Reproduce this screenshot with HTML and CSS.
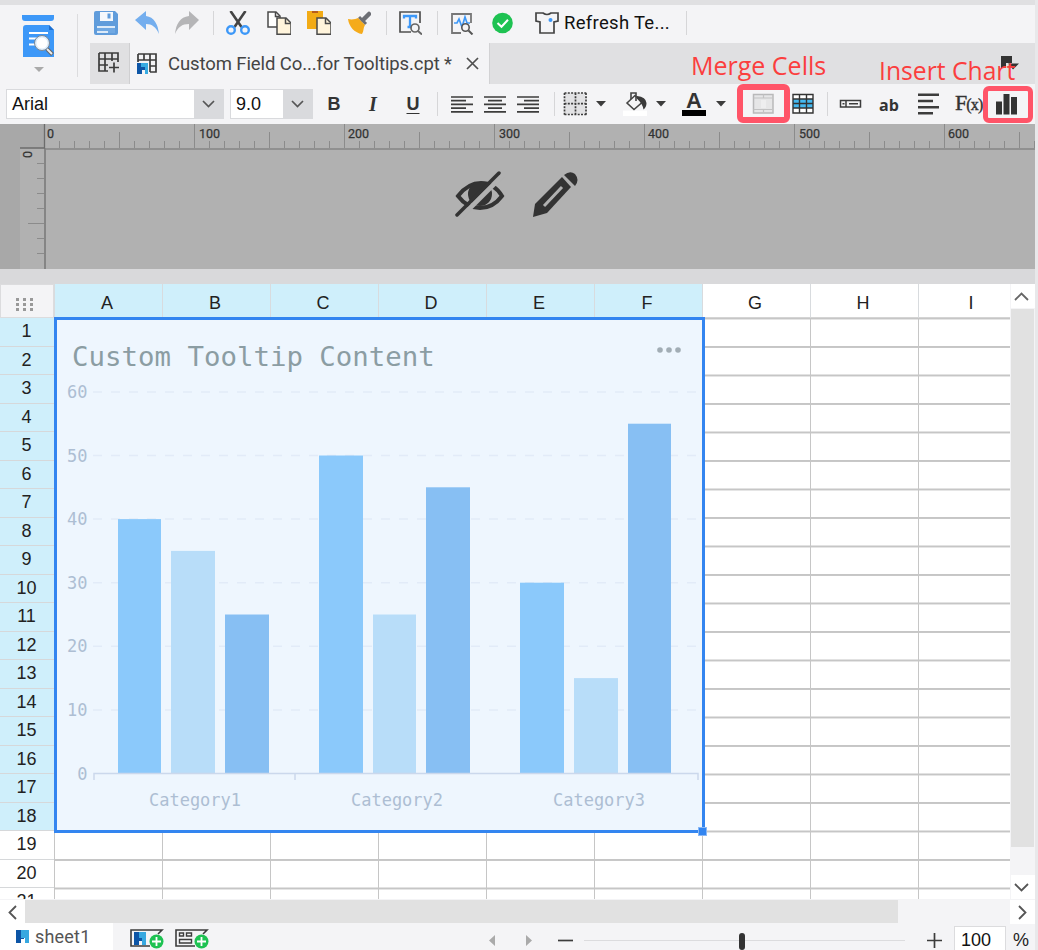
FILE: index.html
```html
<!DOCTYPE html>
<html lang="en">
<head>
    <meta charset="UTF-8">
    <meta name="viewport" content="width=device-width, initial-scale=1.0">
    <title>Report Designer</title>
    <link rel="stylesheet" href="styles.css">
</head>
<body>
    <div class="app">
        <header class="header">
            <div class="mode">
                <svg width="34" height="60" viewBox="0 0 34 60">
                    <path d="M0 1h32v3q0 3-3 3H3q-3 0-3-3z" fill="#3d98f8"/>
                    <path d="M3 11h24l5 5v27H1V14q0-3 3-3z" fill="#3d98f8"/>
                    <path d="M27 11l5 5h-5z" fill="#1c6fd0"/>
                    <path d="M7 19h19M7 24.500h8M7 30.500h6" stroke="#fff" stroke-width="2"/>
                    <path d="M25 35l5.500 5.500" stroke="#666" stroke-width="4"/>
                    <path d="M25 35l5 5" stroke="#eee" stroke-width="2"/>
                    <circle cx="20" cy="29" r="7.500" fill="#dcebf9" stroke="#7b8794"/>
                    <circle cx="20" cy="29" r="5.500" fill="#fff"/>
                    <path d="M12 53h10l-5 5z" fill="#aaa"/>
                </svg>
            </div>
            <div class="header-main">
                <div class="toolbar">
                    <svg class="icon" viewBox="0 0 24 24"><path d="M0 2q0-2 2-2h19l3 3v19q0 2-2 2H2q-2 0-2-2z" fill="#609cdb"/><path d="M6 1h13v9H6z" fill="#f4f8fc"/><path d="M13.500 2.500h3v5h-3z" fill="#609cdb"/><path d="M3 15h18v7H3z" fill="#70a8e2"/><path d="M3 16h18M3 21h11" stroke="#fff" stroke-width="1.500"/></svg>
                    <svg class="icon" viewBox="0 0 24 24"><path d="M0 9L11 0v5c8 1 12 8 13 18C21 16 17 13 11 13v6z" fill="#74aeee"/></svg>
                    <svg class="icon" viewBox="0 0 24 24"><path d="M24 9L14 0v5C5 6 1 13 0 23c3-7 7-10 14-10v6z" fill="#b5b5b7"/></svg>
                    <span class="sep"></span>
                    <svg class="icon" viewBox="0 0 24 24"><path d="M4.500 0L15.500 16M19.500 0L8.500 16" stroke="#444" stroke-width="2.600"/><circle cx="5" cy="19" r="3.800" fill="none" stroke="#3d98f8" stroke-width="2.400"/><circle cx="19" cy="19" r="3.800" fill="none" stroke="#3d98f8" stroke-width="2.400"/></svg>
                    <svg class="icon" viewBox="0 0 24 24"><path d="M1 1h8l4 4v11H1z" fill="#fff" stroke="#4a4a4a" stroke-width="1.500"/><path d="M8.500 1v4.500h4" fill="none" stroke="#4a4a4a" stroke-width="1.500"/><path d="M10 7h9l5 5v11.200H10z" fill="#fff4dc" stroke="#4a4a4a" stroke-width="1.500"/><path d="M18.500 7v5.500h5" fill="none" stroke="#4a4a4a" stroke-width="1.500"/></svg>
                    <svg class="icon" viewBox="0 0 24 24"><path d="M0 0h16v18H0z" fill="#f2ab16"/><path d="M5 0h6v2H5z" fill="#b85c1b"/><path d="M10 7h9l5 5v11.200H10z" fill="#fff4dc" stroke="#4a4a4a" stroke-width="1.500"/><path d="M18.500 7v5.500h5" fill="none" stroke="#4a4a4a" stroke-width="1.500"/></svg>
                    <svg class="icon" viewBox="0 0 24 24"><path d="M16 9l6-6" stroke="#6d6f75" stroke-width="4.500" stroke-linecap="round"/><path d="M12 6l7 7" stroke="#6d6f75" stroke-width="3"/><path d="M1 8c4 1 8 0 10-1l7 7c-2 3-1 6-3 9C8 22 2 16 1 8z" fill="#f5ab1b"/></svg>
                    <span class="sep"></span>
                    <svg class="icon" viewBox="0 0 24 24"><path d="M22 12V1H2v20h11" fill="none" stroke="#505050" stroke-width="1.700"/><path d="M6 7.500V5h12v2.500M12 5v11.500M9.500 16h5" fill="none" stroke="#3d98f8" stroke-width="2.300"/><circle cx="17" cy="17" r="4" fill="#f4f4f6" stroke="#666" stroke-width="1.700"/><path d="M20 20l4 3.500" stroke="#666" stroke-width="2"/></svg>
                    <span class="sep"></span>
                    <svg class="icon" viewBox="0 0 24 24"><path d="M21 12V3H2v19h9" fill="none" stroke="#777" stroke-width="1.800"/><path d="M4 12h3l2-4 3 8 3-10 2 6h3" fill="none" stroke="#3d98f8" stroke-width="1.700"/><circle cx="15.500" cy="16.500" r="3.700" fill="#f4f4f6" stroke="#555" stroke-width="1.600"/><path d="M18.500 19.500l4 4" stroke="#555" stroke-width="2"/></svg>
                    <svg class="icon" viewBox="0 0 24 24"><circle cx="12.500" cy="12" r="10.300" fill="#1ec252"/><path d="M7.500 12l4 3.800 6.500-7" fill="none" stroke="#fff" stroke-width="2"/></svg>
                    <svg class="icon" viewBox="0 0 24 24"><path d="M1 2h7q4 3 8 0h7v8l-4 1v11H5V11l-4-1z" fill="none" stroke="#444" stroke-width="1.700"/><circle cx="15.500" cy="9" r="2" fill="#3d98f8"/></svg>
                    <span class="tool-label">Refresh Te...</span>
                    <span class="sep"></span>
                </div>
                <div class="tabs">
                    <div class="tab-new">
                        <svg width="22" height="22" viewBox="0 0 22 22"><path d="M1 1h19v9M1 1v18h9M1 7h19M1 13h9M7 1v18M14 1v8" fill="none" stroke="#3c3c3c" stroke-width="1.700"/><path d="M11 15.500h10M16 10.500v10" stroke="#3c3c3c" stroke-width="1.700"/></svg>
                    </div>
                    <div class="tab">
                        <svg width="21" height="21" viewBox="0 0 21 21"><path d="M1 1h18v18h-6M1 7h18M13 13h6M1 1v8M7 1v6M13 1v18" fill="none" stroke="#3c3c3c" stroke-width="1.700"/><path d="M0 10h4v4h4v3H5v4H0z" fill="#0d55a6"/><path d="M4 10h7v11H8v-7H4z" fill="#37abe2"/></svg>
                        <span class="tab-name">Custom Field Co...for Tooltips.cpt *</span>
                        <svg width="13" height="13" viewBox="0 0 13 13"><path d="M1 1l11 11M12 1L1 12" stroke="#4f4f4f" stroke-width="1.700"/></svg>
                    </div>
                    <svg class="tab-menu" width="18" height="16" viewBox="0 0 18 16"><path d="M0 0h11v7H5v5H0zM7 7.500h11l-6 6z" fill="#333"/></svg>
                </div>
            </div>
        </header>

        <div class="format-bar">
            <div class="combo combo-font"><span>Arial</span><i><svg width="13" height="8" viewBox="0 0 13 8"><path d="M1 1l5.500 5.500L12 1" fill="none" stroke="#555" stroke-width="1.700"/></svg></i></div>
            <div class="combo combo-size"><span>9.0</span><i><svg width="13" height="8" viewBox="0 0 13 8"><path d="M1 1l5.500 5.500L12 1" fill="none" stroke="#555" stroke-width="1.700"/></svg></i></div>
            <b class="letter">B</b>
            <b class="letter italic">I</b>
            <b class="letter underline">U</b>
            <span class="sep"></span>
            <svg class="icon" viewBox="0 0 24 24"><path d="M1 5h22M1 8.700h15M1 12.400h22M1 16.100h15M1 19.800h22" stroke="#3c3c3c" stroke-width="1.700"/></svg>
            <svg class="icon" viewBox="0 0 24 24"><path d="M1 5h22M5 8.700h14M1 12.400h22M5 16.100h14M1 19.800h22" stroke="#3c3c3c" stroke-width="1.700"/></svg>
            <svg class="icon" viewBox="0 0 24 24"><path d="M1 5h22M8 8.700h15M1 12.400h22M8 16.100h15M1 19.800h22" stroke="#3c3c3c" stroke-width="1.700"/></svg>
            <span class="sep"></span>
            <svg class="icon" viewBox="0 0 24 24"><path d="M2 1h20v21H2z" fill="#e2e2e4"/><path d="M1.500 1h22M1.500 22.500h22M1.500 11.700h22M1.500 1v22M12.500 1v22M23 1v22" fill="none" stroke="#3c3c3c" stroke-width="1.700" stroke-dasharray="2 1.300"/></svg>
            <svg class="caret" viewBox="0 0 10 6"><path d="M0 0h10L5 5.500z" fill="#3c3c3c"/></svg>
            <svg class="icon" viewBox="0 0 24 24"><path d="M0 18.500h24V24H0z" fill="#fff"/><path d="M4 11L12 3.500l7 7-8 7z" fill="#f4f4f6" stroke="#444" stroke-width="1.600"/><path d="M8 7V1h5v8" fill="none" stroke="#444" stroke-width="1.600"/><path d="M14 4q9 1 9.500 7 0 4-3 6.500-1-6-6.500-11z" fill="#3a3a3a"/></svg>
            <svg class="caret" viewBox="0 0 10 6"><path d="M0 0h10L5 5.500z" fill="#3c3c3c"/></svg>
            <b class="letter font-color">A</b>
            <svg class="caret" viewBox="0 0 10 6"><path d="M0 0h10L5 5.500z" fill="#3c3c3c"/></svg>
            <div class="marked">
                <svg class="icon" viewBox="0 0 24 24"><path d="M2.500 2.500h19.500v18.500h-19.500z" fill="#e6e6e7" stroke="#b9b9ba" stroke-width="1.500"/><path d="M2.500 6h19M2.500 17.500h19M12.500 2.500V6M12.500 17v3" stroke="#c2c2c3" stroke-width="1.200"/><path d="M10 8h5v8h-5z" fill="#eeeeef"/></svg>
                <span class="mark mark-merge"></span>
                <span class="note note-merge">Merge Cells</span>
            </div>
            <svg class="icon" viewBox="0 0 24 24"><path d="M2 2.500h20v18.500H2z" fill="#fff"/><path d="M2 7h20v9H2z" fill="#45b9f0"/><path d="M2 2.500h20v18.500H2zM2 7h20M2 11.500h20M2 16h20M8.500 2v19M15.500 2v19" fill="none" stroke="#333" stroke-width="1.400"/></svg>
            <span class="sep"></span>
            <svg class="icon" viewBox="0 0 24 24"><path d="M2.500 8.500h20v6.500h-20zM8 8.500v6M11 11.700h9M4.500 11.700h2" fill="none" stroke="#3c3c3c" stroke-width="1.500"/></svg>
            <b class="letter ab">ab</b>
            <svg class="icon" viewBox="0 0 24 24"><path d="M2 2.700h21M2 9h15M2 15.300h21M2 21.300h15" stroke="#3c3c3c" stroke-width="2.500"/></svg>
            <b class="letter fx">F<small>(x)</small></b>
            <div class="marked">
                <svg class="icon" viewBox="0 0 24 24"><path d="M2 9.500h6v13H2zM9.500 2h6v20.500h-6zM17 5h6v17.500h-6z" fill="#333"/></svg>
                <span class="mark mark-chart"></span>
                <span class="note note-chart">Insert Chart</span>
            </div>
        </div>

        <div class="parent-area">
            <svg class="ruler" width="1035" height="145" viewBox="0 0 1035 145">
                <defs>
                    <pattern id="ticks-x" x="44" y="0" width="150" height="24" patternUnits="userSpaceOnUse">
                        <path d="M.5 0v24M75.500 8v16M15.500 17v7M30.500 17v7M45.500 17v7M60.500 17v7M90.500 17v7M105.500 17v7M120.500 17v7M135.500 17v7" stroke="#8b8b8b"/>
                    </pattern>
                </defs>
                <path d="M0 0h45v24H20v121H0z" fill="#a8a8a8"/>
                <path d="M45 0h990v24H45z" fill="url(#ticks-x)"/>
                <path d="M37 39.500h7M37 54.500h7M37 69.500h7M37 84.500h7M28 99.500h16M37 114.500h7M37 129.500h7" stroke="#8b8b8b"/>
                <path d="M45 25h990" stroke="#909090" stroke-width="2"/>
                <path d="M45 24v121" stroke="#858585" stroke-width="2"/>
                <path d="M44.500 0v24M20 24h25" stroke="#6c6c6c" stroke-width="1.300"/>
                <g class="ruler-text">
                    <text x="47" y="14">0</text>
                    <text x="199" y="14">100</text>
                    <text x="348" y="14">200</text>
                    <text x="499" y="14">300</text>
                    <text x="648" y="14">400</text>
                    <text x="799" y="14">500</text>
                    <text x="948" y="14">600</text>
                    <text x="-34" y="32" transform="rotate(-90)">0</text>
                </g>
            </svg>
            <div class="parent-tools">
                <svg width="50" height="48" viewBox="0 0 50 48">
                    <path d="M3 25Q13 12 26 12t21 13Q38 37 25 37 12 37 3 25z" fill="none" stroke="#333" stroke-width="4"/>
                    <circle cx="25" cy="23" r="12" fill="#333"/>
                    <path d="M4 48L49 3" stroke="#b1b1b1" stroke-width="5"/>
                    <path d="M2 44L44 2" stroke="#333" stroke-width="3.500" stroke-linecap="round"/>
                </svg>
                <svg width="48" height="48" viewBox="0 0 48 48">
                    <path d="M0 46l2-13L29 6l9 10-24 26z" fill="#333"/>
                    <path d="M11 35l18-19" stroke="#b1b1b1" stroke-width="3"/>
                    <path d="M31 4q6-5 11-1 5 6 0 12z" fill="#333"/>
                </svg>
            </div>
        </div>

        <div class="sheet">
            <div class="sheet-main">
                <div class="col-heads">
                    <div class="corner"><svg width="17" height="14" viewBox="0 0 17 14"><path d="M0 1.500h17M0 6.500h17M0 11.500h17" stroke="#999" stroke-width="3" stroke-dasharray="3 4"/></svg></div>
                    <div class="col active">A</div>
                    <div class="col active">B</div>
                    <div class="col active">C</div>
                    <div class="col active">D</div>
                    <div class="col active">E</div>
                    <div class="col active">F</div>
                    <div class="col">G</div>
                    <div class="col">H</div>
                    <div class="col">I</div>
                </div>
                <div class="sheet-body">
                    <div class="row-heads">
                        <div class="row active">1</div>
                        <div class="row active">2</div>
                        <div class="row active">3</div>
                        <div class="row active">4</div>
                        <div class="row active">5</div>
                        <div class="row active">6</div>
                        <div class="row active">7</div>
                        <div class="row active">8</div>
                        <div class="row active">9</div>
                        <div class="row active">10</div>
                        <div class="row active">11</div>
                        <div class="row active">12</div>
                        <div class="row active">13</div>
                        <div class="row active">14</div>
                        <div class="row active">15</div>
                        <div class="row active">16</div>
                        <div class="row active">17</div>
                        <div class="row active">18</div>
                        <div class="row">19</div>
                        <div class="row">20</div>
                        <div class="row">21</div>
                    </div>
                    <div class="cells">
                        <div class="chart">
                            <svg id="chart" width="645" height="509" viewBox="57 320 645 509"></svg>
                            <span class="handle"></span>
                        </div>
                    </div>
                </div>
            </div>
            <div class="v-scroll">
                <div class="scroll-btn"><svg width="15" height="9" viewBox="0 0 15 9"><path d="M1 8l6.500-6.500L14 8" fill="none" stroke="#666" stroke-width="1.800"/></svg></div>
                <div class="v-thumb"></div>
                <div class="scroll-btn"><svg width="15" height="9" viewBox="0 0 15 9"><path d="M1 1l6.500 6.500L14 1" fill="none" stroke="#555" stroke-width="1.800"/></svg></div>
            </div>
        </div>

        <div class="h-scroll">
            <div class="scroll-btn"><svg width="9" height="15" viewBox="0 0 9 15"><path d="M8 1L1.500 7.500 8 14" fill="none" stroke="#555" stroke-width="1.800"/></svg></div>
            <div class="h-thumb"></div>
            <div class="scroll-btn"><svg width="9" height="15" viewBox="0 0 9 15"><path d="M1 1l6.500 6.500L1 14" fill="none" stroke="#555" stroke-width="1.800"/></svg></div>
        </div>

        <footer class="status">
            <div class="sheet-tab">
                <svg width="13" height="13" viewBox="0 0 13 13"><path d="M0 0h5v5h3v4H5v4H0z" fill="#0d55a6"/><path d="M5 0h8v13H9V8H5V5h0z" fill="#37a8e0"/></svg>
                <span>sheet1</span>
            </div>
            <svg class="add-sheet" width="34" height="20" viewBox="0 0 34 20"><path d="M20 17H1V1h31l-4 4" fill="none" stroke="#3c3c3c" stroke-width="1.600"/><path d="M4 3h5v5h3v4H9v4H4z" fill="#0d55a6"/><path d="M9 3h7v13h-4V9H9z" fill="#37a8e0"/><circle cx="26.500" cy="12.500" r="7" fill="#1ec252"/><path d="M22 12.500h9M26.500 8v9" stroke="#fff" stroke-width="1.800"/></svg>
            <svg class="add-form" width="34" height="20" viewBox="0 0 34 20"><path d="M20 17H1V1h31l-4 4" fill="none" stroke="#3c3c3c" stroke-width="1.600"/><path d="M4.500 4h4v3h-4zM11.500 4h5v3h-5zM4.500 10.500h12v3.500h-12z" fill="none" stroke="#3c3c3c" stroke-width="1.400"/><circle cx="26.500" cy="12.500" r="7" fill="#1ec252"/><path d="M22 12.500h9M26.500 8v9" stroke="#fff" stroke-width="1.800"/></svg>
            <svg class="pager" width="43" height="11" viewBox="0 0 43 11"><path d="M6 0v11L0 5.500zM37 0v11l6-5.500z" fill="#aaa"/></svg>
            <svg class="zoom-out" width="15" height="16" viewBox="0 0 15 16"><path d="M0 8.500h15" stroke="#3c3c3c" stroke-width="1.700"/></svg>
            <div class="slider"><span></span></div>
            <svg class="zoom-in" width="15" height="16" viewBox="0 0 15 16"><path d="M0 8.500h15M7.500 1v15" stroke="#3c3c3c" stroke-width="1.700"/></svg>
            <div class="zoom-value">100</div>
            <span class="percent">%</span>
        </footer>
    </div>
    <script src="chart.js"></script>
</body>
</html>
```

FILE: styles.css
```css
/* Base styles */
* {
    box-sizing: border-box;
}

body {
    margin: 0;
    width: 1038px;
    height: 950px;
    overflow: hidden;
    background-color: #e8e8ea;
    font-family: "Liberation Sans", Arial, sans-serif;
    color: #222;
}

svg {
    display: block;
}

.app {
    width: 1035px;
    height: 950px;
    display: flex;
    flex-direction: column;
    background-color: #f4f4f6;
    border-top: 5px solid #e0e0e2;
    overflow: hidden;
}

/* Header */
.header {
    display: flex;
    height: 79px;
}

.mode {
    width: 78px;
    height: 63px;
    margin: 9px 12px 0 0;
    padding-left: 22px;
    border-right: 1px solid #dcdcde;
}

.header-main {
    flex: 1;
}

.toolbar {
    display: grid;
    grid-template-columns: 41px 40px 38px 13px 41px 40px 40px 39px 12px 39px 13px 40px 45px 29px 122px 1px;
    align-items: center;
    height: 38px;
    padding: 0 0 2px 4px;
}

.icon {
    width: 24px;
    height: 24px;
}

.sep {
    width: 1px;
    height: 24px;
    background-color: #d6d6d8;
}

.tool-label {
    font-family: Roboto, sans-serif;
    font-size: 18.5px;
    letter-spacing: 0.3px;
    color: #111;
    white-space: nowrap;
}

.tabs {
    display: flex;
    height: 41px;
    background-color: #e0e0e2;
}

.tab-new {
    width: 40px;
    padding: 9px 0 0 8px;
    border-right: 1px solid #cfcfd1;
}

.tab {
    display: flex;
    align-items: center;
    width: 360px;
    padding-left: 7px;
    background-color: #f4f4f6;
    border-right: 1px solid #d2d2d4;
}

.tab-name {
    width: 289px;
    margin: 0 9px 0 10px;
    font-family: Roboto, sans-serif;
    font-size: 18.5px;
    letter-spacing: -0.1px;
    color: #444;
    white-space: nowrap;
}

.tab-menu {
    margin: 13px 0 0 511px;
}

/* Format bar */
.format-bar {
    display: grid;
    grid-template-columns: 224px 92px 39px 40px 36px 13px 33px 33px 38px 9px 33px 27px 33px 26px 34px 35px 40px 36px 11px 39px 39px 39px 39px 24px;
    align-items: center;
    height: 40px;
    padding-left: 6px;
}

.combo {
    display: flex;
    height: 30px;
    border: 1px solid #d9dadd;
    background-color: #fff;
    font-size: 18px;
    line-height: 28px;
    color: #111;
}

.combo span {
    flex: 1;
    padding-left: 5px;
}

.combo i {
    display: flex;
    align-items: center;
    justify-content: center;
    width: 29px;
    background-color: #d9dadd;
}

.combo-font {
    width: 218px;
}

.combo-size {
    width: 83px;
}

.letter {
    width: 24px;
    text-align: center;
    font-size: 18px;
    line-height: 22px;
    color: #333;
}

.italic {
    font-family: "Liberation Serif", serif;
    font-style: italic;
    font-size: 20px;
}

.underline {
    text-decoration: underline;
    text-underline-offset: 3px;
    text-decoration-thickness: 1px;
}

.font-color {
    height: 24px;
    border-bottom: 6px solid #000;
    font-size: 22px;
    line-height: 17px;
}

.ab {
    font-family: "Open Sans", sans-serif;
    font-size: 16px;
    line-height: 26px;
    padding-top: 2px;
}

.fx {
    font-family: "Liberation Serif", serif;
    font-size: 22px;
    font-weight: normal;
    letter-spacing: -1px;
    white-space: nowrap;
    -webkit-text-stroke: 0.4px #333;
}

.fx small {
    font-size: 16px;
    letter-spacing: -0.8px;
}

.caret {
    width: 10px;
    height: 6px;
}

/* Call-outs over the tool buttons */
.marked {
    position: relative;
}

.mark {
    position: absolute;
    border: 6px solid #ff5468;
    border-radius: 6px;
}

.mark-merge {
    left: -14px;
    top: -8px;
    width: 53px;
    height: 39px;
}

.mark-chart {
    left: -11px;
    top: -6px;
    width: 50px;
    height: 37px;
    border-width: 5px;
}

.note {
    position: absolute;
    font-family: "Open Sans", sans-serif;
    font-size: 25px;
    line-height: 30px;
    color: #fb3e3e;
    white-space: nowrap;
}

.note-merge {
    left: -60px;
    top: -42px;
}

.note-chart {
    left: -115px;
    top: -36px;
    font-size: 24.7px;
}

/* Parent report area with rulers */
.parent-area {
    position: relative;
    height: 145px;
    background-color: #b1b1b1;
}

.ruler-text {
    font-family: Roboto, sans-serif;
    font-size: 12.5px;
    fill: #333;
    stroke: #333;
    stroke-width: 0.25px;
}

.parent-tools {
    position: absolute;
    left: 455px;
    top: 47px;
    display: flex;
    gap: 28px;
}

/* Sheet */
.sheet {
    display: flex;
    height: 630px;
    border-top: 15px solid #d9d9db;
}

.sheet-main {
    width: 1010px;
    background-color: #fff;
    overflow: hidden;
}

.col-heads {
    display: flex;
    width: 1026px;
    height: 34px;
    font-size: 18px;
}

.corner {
    display: flex;
    align-items: center;
    width: 54px;
    padding: 7px 0 0 15px;
    background-color: #f4f4f6;
    border: 1px solid #dcdcde;
}

.col {
    width: 108px;
    line-height: 38px;
    text-align: center;
    padding-right: 3px;
    border-left: 1px solid #d8dbde;
    border-bottom: 1px solid #d4d4d4;
}

.active {
    background-color: #cfeffb;
}

.sheet-body {
    display: flex;
    height: 581px;
}

.row-heads {
    width: 54px;
    font-size: 18px;
}

.row {
    height: 28.5px;
    line-height: 26px;
    padding-right: 1px;
    text-align: center;
    border-bottom: 1.5px solid #d6d8da;
}

.cells {
    width: 956px;
    height: 581px;
    background-image: linear-gradient(90deg, #c6c6c6 1.5px, transparent 1.5px), linear-gradient(#c6c6c6 1.5px, transparent 1.5px);
    background-size: 108px 28.5px;
    background-position: 0 -0.5px;
}

.chart {
    position: relative;
    width: 651px;
    height: 516px;
    margin-top: -1px;
    border: 3px solid #3385f0;
    background-color: #eef6fe;
}

.handle {
    position: absolute;
    right: -5px;
    bottom: -6px;
    width: 9px;
    height: 9px;
    background-color: #3385f0;
    border: 1px solid #8ab8f5;
}

.chart-title {
    font-family: "DejaVu Sans Mono", monospace;
    font-size: 27.4px;
    fill: #8b9da3;
}

.chart-label {
    font-family: "DejaVu Sans Mono", monospace;
    font-size: 17px;
    fill: #adbed3;
}

.grid-line {
    stroke: #e2ebf8;
    stroke-width: 1.5px;
    stroke-dasharray: 9 9;
}

.axis {
    fill: none;
    stroke: #cbd8ec;
    stroke-width: 1.5px;
}

.dot {
    fill: #a2adb5;
}

.series-1 {
    fill: #8bc9fb;
}

.series-2 {
    fill: #b8ddf9;
}

.series-3 {
    fill: #87bff3;
}

/* Scrollbars */
.v-scroll {
    display: flex;
    flex-direction: column;
    width: 24px;
    margin-left: 1px;
}

.scroll-btn {
    display: flex;
    align-items: center;
    justify-content: center;
    flex: none;
    height: 24px;
    background-color: #fff;
}

.v-scroll .scroll-btn {
    padding-right: 3px;
}

.v-thumb {
    width: 23px;
    height: 538px;
    margin: 1px 0 28px;
    background-color: #e1e1e1;
}

.h-scroll {
    display: flex;
    justify-content: space-between;
    height: 24px;
    padding-top: 1px;
}

.h-scroll .scroll-btn {
    width: 25px;
}

.h-thumb {
    width: 873px;
    height: 23px;
    margin-right: auto;
    background-color: #e1e1e1;
}

/* Status bar */
.status {
    display: flex;
    align-items: flex-start;
    height: 27px;
}

.sheet-tab {
    display: flex;
    align-items: center;
    gap: 6px;
    width: 113px;
    height: 27px;
    padding-left: 16px;
    background-color: #fff;
    font-family: Roboto, sans-serif;
    font-size: 18px;
    letter-spacing: 0.2px;
    color: #555;
}

.add-sheet {
    margin: 6px 0 0 17px;
}

.add-form {
    margin: 6px 0 0 11px;
}

.pager {
    margin: 12px 0 0 280px;
}

.zoom-out {
    margin: 9px 0 0 26px;
}

.slider {
    display: flex;
    align-items: center;
    width: 321px;
    height: 17px;
    margin: 10px 22px 0 11px;
    padding-left: 155px;
    background: linear-gradient(#dcdcde, #dcdcde) 0 7px / 100% 1px no-repeat;
}

.slider span {
    width: 6px;
    height: 17px;
    border-radius: 3px;
    background-color: #333;
}

.zoom-in {
    margin-top: 9px;
}

.zoom-value {
    width: 52px;
    height: 27px;
    margin: 3px 7px 0 12px;
    padding-left: 6px;
    border: 1px solid #dcdcde;
    background-color: #fff;
    font-size: 18px;
    line-height: 26px;
    color: #111;
}

.percent {
    font-size: 18px;
    line-height: 34px;
}
```

FILE: chart.js
```js
const svg = document.getElementById('chart');

const bars = [
    { series: 1, x: 118, width: 43, value: 40 },
    { series: 2, x: 171, width: 44, value: 35 },
    { series: 3, x: 225, width: 44, value: 25 },
    { series: 1, x: 319, width: 44, value: 50 },
    { series: 2, x: 373, width: 43, value: 25 },
    { series: 3, x: 426, width: 44, value: 45 },
    { series: 1, x: 520, width: 44, value: 30 },
    { series: 2, x: 574, width: 44, value: 15 },
    { series: 3, x: 628, width: 43, value: 55 }
];

const zeroY = 773.5;
const unit = 6.36;

function add(name, attrs, text) {
    const el = document.createElementNS('http://www.w3.org/2000/svg', name);
    for (const key in attrs) {
        el.setAttribute(key, attrs[key]);
    }
    if (text) {
        el.textContent = text;
    }
    svg.appendChild(el);
}

add('text', { class: 'chart-title', x: 72, y: 365.5 }, 'Custom Tooltip Content');

[660, 669, 678].forEach(x => add('circle', { class: 'dot', cx: x, cy: 350, r: 2.8 }));

for (let v = 0; v <= 60; v += 10) {
    const y = zeroY - v * unit;
    if (v > 0) {
        add('path', { class: 'grid-line', d: `M93 ${y}H698` });
    }
    add('text', { class: 'chart-label', x: 87.5, y: y + 6, 'text-anchor': 'end' }, String(v));
}

bars.forEach(bar => {
    const height = bar.value * unit;
    add('rect', { class: 'series-' + bar.series, x: bar.x, y: zeroY - height, width: bar.width, height: height });
});

add('path', { class: 'axis', d: 'M94 780v-6.5H698v6.5M295 773.5v6.5' });

['Category1', 'Category2', 'Category3'].forEach((name, i) => {
    add('text', { class: 'chart-label', x: 195 + i * 202, y: 806, 'text-anchor': 'middle' }, name);
});
```
